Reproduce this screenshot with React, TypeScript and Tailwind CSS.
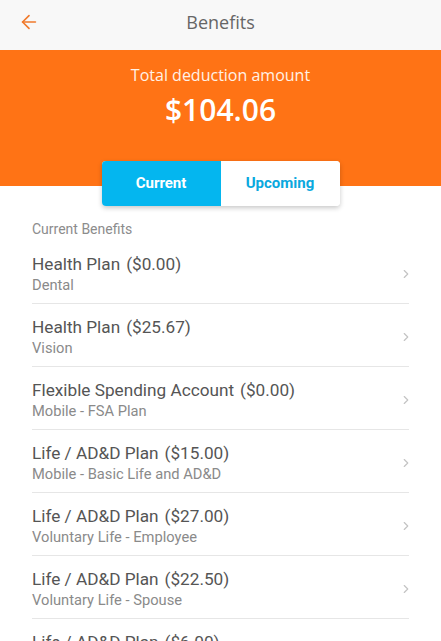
import { ChevronRight } from "lucide-react";

const benefits = [
  { name: "Health Plan", amount: "($0.00)", detail: "Dental" },
  { name: "Health Plan", amount: "($25.67)", detail: "Vision" },
  { name: "Flexible Spending Account", amount: "($0.00)", detail: "Mobile - FSA Plan" },
  { name: "Life / AD&D Plan", amount: "($15.00)", detail: "Mobile - Basic Life and AD&D" },
  { name: "Life / AD&D Plan", amount: "($27.00)", detail: "Voluntary Life - Employee" },
  { name: "Life / AD&D Plan", amount: "($22.50)", detail: "Voluntary Life - Spouse" },
  { name: "Life / AD&D Plan", amount: "($6.00)", detail: "Voluntary Life - Child" },
];

export default function App() {
  return (
    <div className="h-[641px] w-[441px] overflow-hidden bg-white" style={{ fontFamily: "Roboto, sans-serif" }}>
      {/* top bar */}
      <div className="relative flex h-[50px] items-center justify-center bg-[#f8f8f8]">
        <button className="absolute left-[18px] top-[11px] text-[#f07a2c]">
          <svg width="22" height="22" viewBox="0 0 24 24" fill="none" stroke="currentColor" strokeWidth="1.8" strokeLinecap="round" strokeLinejoin="round">
            <path d="M19 12H5" />
            <path d="M12 19l-7-7 7-7" />
          </svg>
        </button>
        <h1 className="-mt-[6px] text-[18px] text-[#666]" style={{ fontFamily: "'Open Sans', sans-serif" }}>
          Benefits
        </h1>
      </div>

      {/* deduction summary */}
      <div className="bg-[#ff7315] pt-[14px] text-center text-white" style={{ fontFamily: "'Open Sans', sans-serif" }}>
        <p className="text-[16px] leading-[22px] text-[#fff1e6]">Total deduction amount</p>
        <p className="mt-[4px] text-[30px] font-semibold leading-[40px]">$104.06</p>
        <div className="h-[56px]" />
      </div>

      {/* tabs */}
      <div className="-mt-[25px] flex justify-center">
        <div className="flex h-[45px] w-[238px] overflow-hidden rounded-[4px] bg-white shadow-[0_2px_5px_rgba(0,0,0,0.22)]">
          <button className="flex-1 bg-[#04b6ef] text-[15px] font-bold text-white">Current</button>
          <button className="flex-1 bg-white text-[15px] font-bold text-[#0aa8de]">Upcoming</button>
        </div>
      </div>

      {/* list */}
      <div className="px-8 pt-[14px]">
        <p className="text-[14px] leading-[18px] text-[#8c8c8c]">Current Benefits</p>
        <ul className="mt-[3px]">
          {benefits.map((b, i) => (
            <li key={i} className="flex h-[63px] items-center border-b border-[#e6e6e6]">
              <div className="flex-1 pt-[4px]">
                <p className="text-[17.2px] leading-[22px] text-[#555]">
                  {b.name}
                  <span className="ml-[6px]">{b.amount}</span>
                </p>
                <p className="text-[14.7px] leading-[20px] text-[#8a8a8a]">{b.detail}</p>
              </div>
              <ChevronRight size={14} strokeWidth={2} className="mr-[-4px] mt-[4px] text-[#c4c4c4]" />
            </li>
          ))}
        </ul>
      </div>
    </div>
  );
}
